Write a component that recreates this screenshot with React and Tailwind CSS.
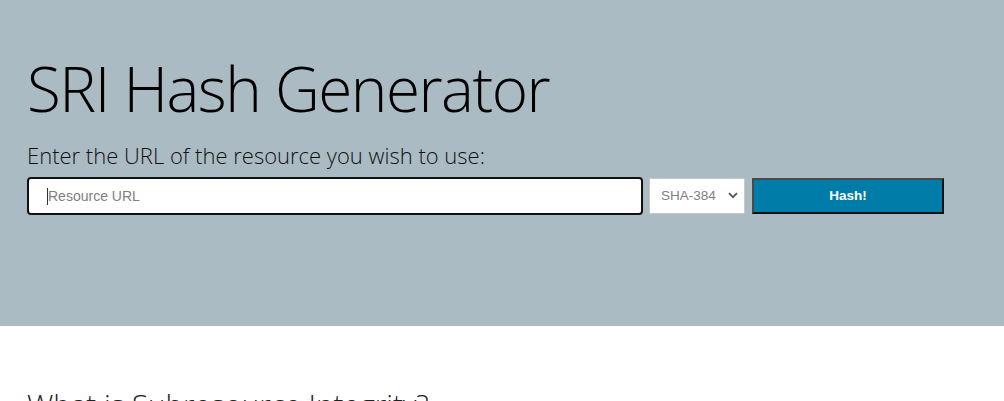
import React from 'react'

export default function App() {
  return (
    <div className="w-[1004px] h-[401px] overflow-hidden bg-white font-['Open_Sans',sans-serif]">
      {/* Hero */}
      <section className="h-[326px] bg-[#abbbc4] pl-[27px] pt-[52px]">
        <h1 className="text-[62px] leading-[72px] font-light text-black tracking-[-1.5px]">
          SRI Hash Generator
        </h1>
        <p className="mt-[16px] text-[22px] leading-[30px] font-light text-[#111]">
          Enter the URL of the resource you wish to use:
        </p>
        <form className="mt-[7px] flex items-center" onSubmit={(e) => e.preventDefault()}>
          <div className="relative">
            <input
              type="text"
              placeholder="Resource URL"
              className="w-[616px] h-[38px] rounded-[4px] border-2 border-[#111] bg-white pl-[19px] font-['Liberation_Sans',Arial,sans-serif] text-[14px] text-black placeholder:text-[#808080] outline-none"
            />
            <span className="absolute left-[20px] top-[11px] h-[17px] w-px bg-[#333]" />
          </div>
          <div className="relative ml-[6px]">
            <select className="appearance-none w-[96px] h-[36px] border border-[#c8c8c8] bg-white pl-[11px] font-['Liberation_Sans',Arial,sans-serif] text-[13.5px] text-[#808080] outline-none">
              <option>SHA-384</option>
              <option>SHA-256</option>
              <option>SHA-512</option>
            </select>
            <svg
              className="pointer-events-none absolute right-[7px] top-[14px]"
              width="10"
              height="7"
              viewBox="0 0 10 7"
              fill="none"
            >
              <path d="M1 1.2 L5 5.2 L9 1.2" stroke="#555" strokeWidth="1.8" />
            </svg>
          </div>
          <button
            type="submit"
            className="ml-[7px] w-[192px] h-[36px] bg-[#007ca8] border-2 border-t-[#4a4a4a] border-l-[#4a4a4a] border-b-[#111] border-r-[#111] font-['Liberation_Sans',Arial,sans-serif] text-[13.5px] font-bold text-white"
          >
            Hash!
          </button>
        </form>
      </section>

      {/* What is SRI */}
      <section className="pl-[27px] pt-[61px]">
        <h2 className="text-[29.5px] leading-[36px] font-light text-[#222]">
          What is Subresource Integrity?
        </h2>
      </section>
    </div>
  )
}
